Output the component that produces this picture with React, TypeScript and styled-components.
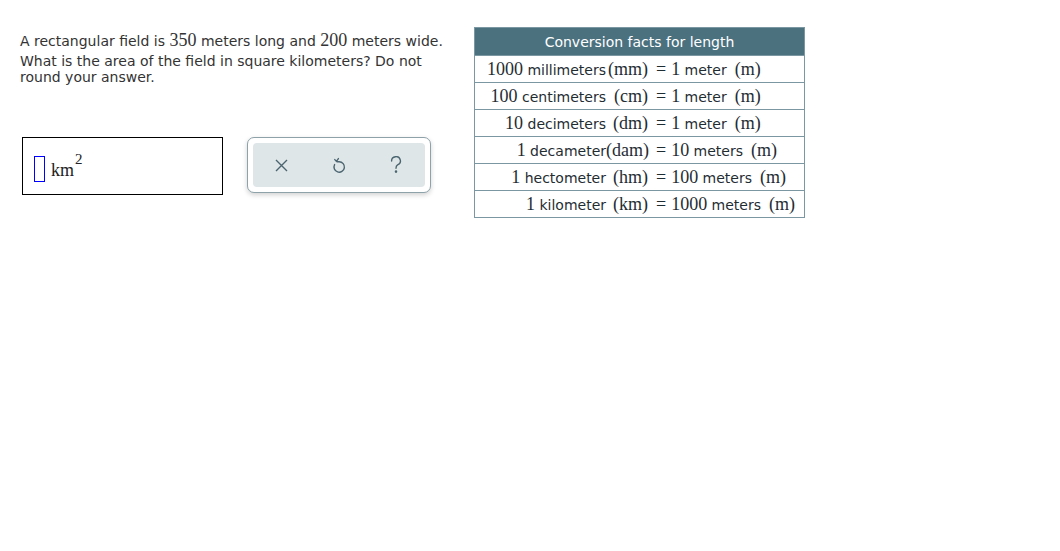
import React from 'react';
import styled, { createGlobalStyle } from 'styled-components';

const GlobalStyle = createGlobalStyle`
  body {
    margin: 0;
    background: #fff;
    font-family: "DejaVu Sans", Verdana, sans-serif;
  }
`;

const Page = styled.div`
  display: flex;
  align-items: flex-start;
  gap: 14px;
  padding: 27px 0 0 20px;
`;

const LeftCol = styled.div`
  width: 440px;
  display: flex;
  flex-direction: column;
`;

const Question = styled.div`
  font-size: 14px;
  line-height: 16px;
  color: #333;
  padding-top: 2px;
`;

const FirstLine = styled.div`
  line-height: 22px;
  margin-bottom: 1px;
`;

const M = styled.span`
  font-family: "Liberation Serif", "Times New Roman", serif;
  font-size: 18px;
`;

const AnswerRow = styled.div`
  display: flex;
  align-items: flex-start;
  gap: 24px;
  margin-top: 52px;
  padding-left: 2px;
`;

const InputBox = styled.div`
  box-sizing: border-box;
  width: 201px;
  height: 58px;
  border: 1px solid #000;
  display: flex;
  align-items: flex-start;
  padding: 18px 0 0 11px;
  gap: 6px;
`;

const Cursor = styled.div`
  box-sizing: border-box;
  width: 11px;
  height: 26px;
  border: 1px solid #0000ff;
`;

const Unit = styled.span`
  font-family: "Liberation Serif", "Times New Roman", serif;
  font-size: 18px;
  line-height: 22px;
  color: #222;
  margin-top: 3px;
  sup {
    font-size: 15px;
    position: relative;
    top: -5px;
    margin-left: 1px;
    vertical-align: super;
    line-height: 0;
  }
`;

const Panel = styled.div`
  box-sizing: border-box;
  width: 184px;
  height: 56px;
  border: 1px solid #8ea2aa;
  border-radius: 7px;
  padding: 5px;
  box-shadow: 0 2px 5px rgba(0, 0, 0, 0.18);
  background: #fff;
`;

const Tools = styled.div`
  height: 100%;
  background: #dfe6e8;
  border-radius: 4px;
  display: flex;
  align-items: center;
  justify-content: space-between;
  padding: 0 21px 0 20px;
`;

const ToolButton = styled.button`
  border: none;
  background: none;
  padding: 0;
  width: 16px;
  height: 20px;
  display: flex;
  align-items: center;
  justify-content: center;
  color: #4b6570;
  cursor: pointer;
`;

const Table = styled.div`
  width: 331px;
  box-sizing: border-box;
  border: 1px solid #7b98a2;
`;

const Header = styled.div`
  background: #4b717f;
  color: #fff;
  font-size: 14px;
  height: 27px;
  line-height: 29px;
  text-align: center;
`;

const Row = styled.div`
  display: grid;
  grid-template-columns: 131px 44px 1fr;
  height: 26px;
  align-items: center;
  border-top: 1px solid #7b98a2;
  font-size: 14px;
  color: #1f2d33;
  white-space: nowrap;
`;

const Quantity = styled.div`
  text-align: right;
`;

const Abbr = styled.div`
  text-align: right;
  padding-right: 2px;
`;

const Right = styled.div`
  text-align: left;
  padding-left: 6px;
`;

const P = styled.span`
  font-family: "Liberation Serif", "Times New Roman", serif;
  font-size: 18px;
`;

const Paren = styled(P)`
  margin-left: 8px;
`;

const Eq = styled(P)`
  margin-right: 5px;
`;

const facts = [
  ['1000', 'millimeters', 'mm', '1', 'meter'],
  ['100', 'centimeters', 'cm', '1', 'meter'],
  ['10', 'decimeters', 'dm', '1', 'meter'],
  ['1', 'decameter', 'dam', '10', 'meters'],
  ['1', 'hectometer', 'hm', '100', 'meters'],
  ['1', 'kilometer', 'km', '1000', 'meters'],
];

const App: React.FC = () => {
  return (
    <>
      <GlobalStyle />
      <Page>
        <LeftCol>
          <Question>
            <FirstLine>
              A rectangular field is <M>350</M> meters long and <M>200</M> meters wide.
            </FirstLine>
            What is the area of the field in square kilometers? Do not round your answer.
          </Question>
          <AnswerRow>
            <InputBox>
              <Cursor />
              <Unit>
                km<sup>2</sup>
              </Unit>
            </InputBox>
            <Panel>
              <Tools>
                <ToolButton aria-label="clear">
                  <svg width="13" height="13" viewBox="0 0 13 13" fill="none" stroke="currentColor" strokeWidth="1.4">
                    <path d="M1 1 L12 12 M12 1 L1 12" />
                  </svg>
                </ToolButton>
                <ToolButton aria-label="undo">
                  <svg width="14" height="18" viewBox="0 0 14 18" fill="none" stroke="currentColor" strokeWidth="1.4" strokeLinecap="round" strokeLinejoin="round">
                    <path d="M2.6 8.6 A5.2 5.2 0 1 0 7.2 5.8 H5.2" />
                    <path d="M6.4 2.6 L4.4 5.4 L2.8 3.6" />
                  </svg>
                </ToolButton>
                <ToolButton aria-label="help">
                  <svg width="12" height="18" viewBox="0 0 12 18" fill="none" stroke="currentColor" strokeWidth="1.4" strokeLinecap="round">
                    <path d="M1.6 5 A4.4 4.2 0 1 1 7.6 8.8 C6.2 9.6 6 10.4 6 12.2" />
                    <circle cx="6" cy="15.6" r="0.6" fill="currentColor" />
                  </svg>
                </ToolButton>
              </Tools>
            </Panel>
          </AnswerRow>
        </LeftCol>
        <Table>
          <Header>Conversion facts for length</Header>
          {facts.map(([n, unit, abbr, v, word]) => (
            <Row key={abbr}>
              <Quantity>
                <P>{n}</P> {unit}
              </Quantity>
              <Abbr>
                <P>({abbr})</P>
              </Abbr>
              <Right>
                <Eq>=</Eq>
                <P>{v}</P> {word}
                <Paren>(m)</Paren>
              </Right>
            </Row>
          ))}
        </Table>
      </Page>
    </>
  );
};

export default App;
